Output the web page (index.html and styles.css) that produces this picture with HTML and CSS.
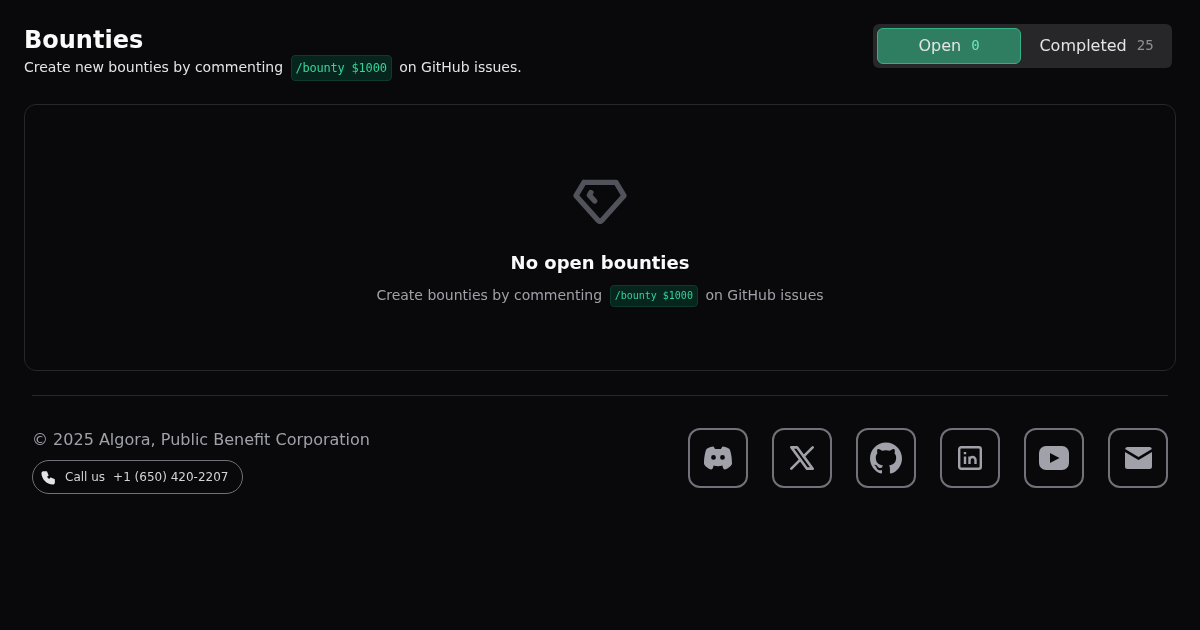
FILE: index.html
```html
<!DOCTYPE html>
<html lang="en">
<head>
<meta charset="utf-8">
<title>Bounties</title>
<link rel="stylesheet" href="styles.css">
</head>
<body>
<main class="page">
  <header class="head">
    <div class="intro">
      <h1 class="title">Bounties</h1>
      <p class="sub">Create new bounties by commenting <code class="cmd">/bounty $1000</code> on GitHub issues.</p>
    </div>
    <div class="tabs">
      <button class="tab tab-on"><span>Open</span><span class="count count-on">0</span></button>
      <button class="tab tab-off"><span>Completed</span><span class="count">25</span></button>
    </div>
  </header>
  <section class="empty">
    <svg class="gem" viewBox="0 0 24 24" width="64" height="64" fill="none" stroke="currentColor" stroke-width="2" stroke-linecap="round" stroke-linejoin="round"><path d="M6 5h12l3 5l-8.5 9.5a.7 .7 0 0 1 -1 0l-8.5 -9.5l3 -5"/><path d="M10 12l-2 -2.2l.6 -1"/></svg>
    <h2 class="empty-title">No open bounties</h2>
    <p class="empty-text">Create bounties by commenting <code class="cmd cmd-sm">/bounty $1000</code> on GitHub issues</p>
  </section>
  <footer class="foot">
    <div class="legal">
      <p class="copy">© 2025 Algora, Public Benefit Corporation</p>
      <a class="call">
        <svg viewBox="0 0 24 24" width="17" height="17" fill="currentColor"><path d="M9 3a1 1 0 0 1 .877 .519l.051 .11l2 5a1 1 0 0 1 -.313 1.16l-.1 .068l-1.674 1.004l.063 .103a10 10 0 0 0 3.132 3.132l.102 .062l1.005 -1.672a1 1 0 0 1 1.113 -.453l.115 .039l5 2a1 1 0 0 1 .622 .807l.007 .121v4c0 1.657 -1.343 3 -3.06 2.998c-8.579 -.521 -15.418 -7.36 -15.94 -15.998a3 3 0 0 1 2.824 -2.995l.176 -.005h4z"/></svg>
        <span>Call us</span><span>+1 (650) 420-2207</span>
      </a>
    </div>
    <nav class="socials">
      <a class="social"><svg viewBox="0 0 28 24" width="28" height="24" fill="currentColor" fill-rule="evenodd"><path d="M9 .5C10 .5 10.5 2 11 3H17C17.5 2 18 .5 19 .5C22 1 24 2 25.5 3C27 6 28 12 28 18C27 20 24 23 20.5 23.5C19.5 23.5 18.5 21 18.5 19.5C15.5 20.5 12.5 20.5 9.5 19.5C9.5 21 8.5 23.5 7.5 23.5C4 23 1 20 0 18C0 12 1 6 2.5 3C4 2 6 1 9 .5ZM9.5 9a2.4 2.4 0 1 0 0 4.8a2.4 2.4 0 1 0 0 -4.8ZM18.5 9a2.4 2.4 0 1 0 0 4.8a2.4 2.4 0 1 0 0 -4.8Z"/></svg></a>
      <a class="social"><svg viewBox="0 0 24 24" width="32" height="32" fill="none" stroke="currentColor" stroke-width="2" stroke-linecap="round" stroke-linejoin="round"><path d="M4 4l11.733 16h4.267l-11.733 -16z"/><path d="M4 20l6.768 -6.768m2.46 -2.46l6.772 -6.772"/></svg></a>
      <a class="social"><svg viewBox="0 0 24 24" width="32" height="32" fill="currentColor"><path d="M12 .297c-6.63 0-12 5.373-12 12 0 5.303 3.438 9.8 8.205 11.385.6.113.82-.258.82-.577 0-.285-.01-1.04-.015-2.04-3.338.724-4.042-1.61-4.042-1.61C4.422 18.07 3.633 17.7 3.633 17.7c-1.087-.744.084-.729.084-.729 1.205.084 1.838 1.236 1.838 1.236 1.07 1.835 2.809 1.305 3.495.998.108-.776.417-1.305.76-1.605-2.665-.3-5.466-1.332-5.466-5.93 0-1.31.465-2.38 1.235-3.22-.135-.303-.54-1.523.105-3.176 0 0 1.005-.322 3.3 1.23.96-.267 1.98-.399 3-.405 1.02.006 2.04.138 3 .405 2.28-1.552 3.285-1.23 3.285-1.23.645 1.653.24 2.873.12 3.176.765.84 1.23 1.91 1.23 3.22 0 4.61-2.805 5.625-5.475 5.92.42.36.81 1.096.81 2.22 0 1.606-.015 2.896-.015 3.286 0 .315.21.69.825.57C20.565 22.092 24 17.592 24 12.297c0-6.627-5.373-12-12-12"/></svg></a>
      <a class="social"><svg viewBox="0 0 24 24" width="24" height="24" fill="none" stroke="currentColor" stroke-width="2.4"><rect x="1.2" y="1.2" width="21.6" height="21.6" rx="2"/><path d="M7 10.5v7.5M7 6v2.2M11.5 18v-7.5M11.5 14a3 3 0 0 1 6 0v4"/></svg></a>
      <a class="social"><svg viewBox="0 0 30 24" width="30" height="24"><path fill="currentColor" d="M7 0h16a7 7 0 0 1 7 7v10a7 7 0 0 1 -7 7h-16a7 7 0 0 1 -7 -7v-10a7 7 0 0 1 7 -7z"/><path fill="#09090b" d="M11 7l9.5 5l-9.5 5z"/></svg></a>
      <a class="social"><svg viewBox="0 0 27 22" width="27" height="22" fill="currentColor"><path d="M2.5 0h22a2.5 2.5 0 0 1 2.4 2l-13.4 8l-13.4 -8a2.5 2.5 0 0 1 2.4 -2z"/><path d="M0 5l13 7.8a1 1 0 0 0 1 0l13 -7.8v14.5a2.5 2.5 0 0 1 -2.5 2.5h-22a2.5 2.5 0 0 1 -2.5 -2.5z"/></svg></a>
    </nav>
  </footer>
</main>
</body>
</html>
```
FILE: styles.css
```css
* { box-sizing: border-box; }
html, body { margin: 0; height: 100%; }
body {
  background: #09090b;
  color: #fafafa;
  font-family: "DejaVu Sans", sans-serif;
}
.page { padding: 24px 24px 0; will-change: transform; }
.head {
  display: flex;
  justify-content: space-between;
  align-items: flex-start;
  padding-right: 4px;
}
.title {
  margin: 0;
  font-size: 24px;
  line-height: 32px;
  font-weight: 700;
}
.sub {
  margin: -3px 0 0;
  font-size: 14px;
  line-height: 24px;
  color: #e4e4e7;
  display: flex;
  align-items: center;
  gap: 7.5px;
}
.cmd {
  font-family: "DejaVu Sans Mono", monospace;
  font-size: 12px;
  line-height: 16px;
  letter-spacing: -0.22px;
  color: #34d399;
  background: #06261d;
  border: 1px solid #0d3a2d;
  border-radius: 4px;
  padding: 4px;
  margin: 2px 0 0;
  display: inline-block;
}
.tabs {
  display: flex;
  width: 299px;
  height: 44px;
  padding: 4px;
  gap: 4px;
  background: #27272a;
  border-radius: 6px;
}
.tab {
  flex: 1;
  display: flex;
  align-items: center;
  justify-content: center;
  gap: 10px;
  font: inherit;
  font-size: 16px;
  color: #e4e4e7;
  background: none;
  border: 1px solid transparent;
  border-radius: 6px;
  padding: 0 0 2px;
}
.tab-on {
  flex: 0 0 144px;
  background: #307e62;
  border-color: #34b285;
}
.count {
  font-family: "DejaVu Sans Mono", monospace;
  font-size: 14px;
  color: #8f8f97;
}
.count-on { color: #6ee7b7; }
.empty {
  margin-top: 23px;
  height: 267px;
  border: 1px solid #27272a;
  border-radius: 12px;
  display: flex;
  flex-direction: column;
  align-items: center;
  padding-top: 64px;
}
.gem { color: #52525b; }
.empty-title {
  margin: 16px 0 0;
  font-size: 18px;
  line-height: 28px;
  font-weight: 700;
}
.empty-text {
  margin: 6px 0 0;
  font-size: 14px;
  line-height: 24px;
  color: #a1a1aa;
  display: flex;
  align-items: center;
  gap: 7.5px;
}
.cmd-sm {
  font-size: 10px;
  letter-spacing: 0;
  padding: 2px 4px;
}
.foot {
  margin: 24px 8px 0;
  padding-top: 32px;
  border-top: 1px solid #27272a;
  display: flex;
  justify-content: space-between;
  align-items: flex-start;
}
.copy {
  margin: 0;
  font-size: 16px;
  line-height: 24px;
  color: #a1a1aa;
}
.call {
  margin-top: 8px;
  width: 211px;
  height: 34px;
  border: 1px solid #71717a;
  border-radius: 17px;
  padding-left: 7px;
  display: flex;
  align-items: center;
  gap: 8px;
  font-size: 12px;
  color: #d4d4d8;
}
.call svg { color: #e4e4e7; }
.socials { display: flex; gap: 24px; }
.social {
  width: 60px;
  height: 60px;
  border: 2px solid #71717a;
  border-radius: 12px;
  display: flex;
  align-items: center;
  justify-content: center;
  color: #a1a1aa;
}
```
